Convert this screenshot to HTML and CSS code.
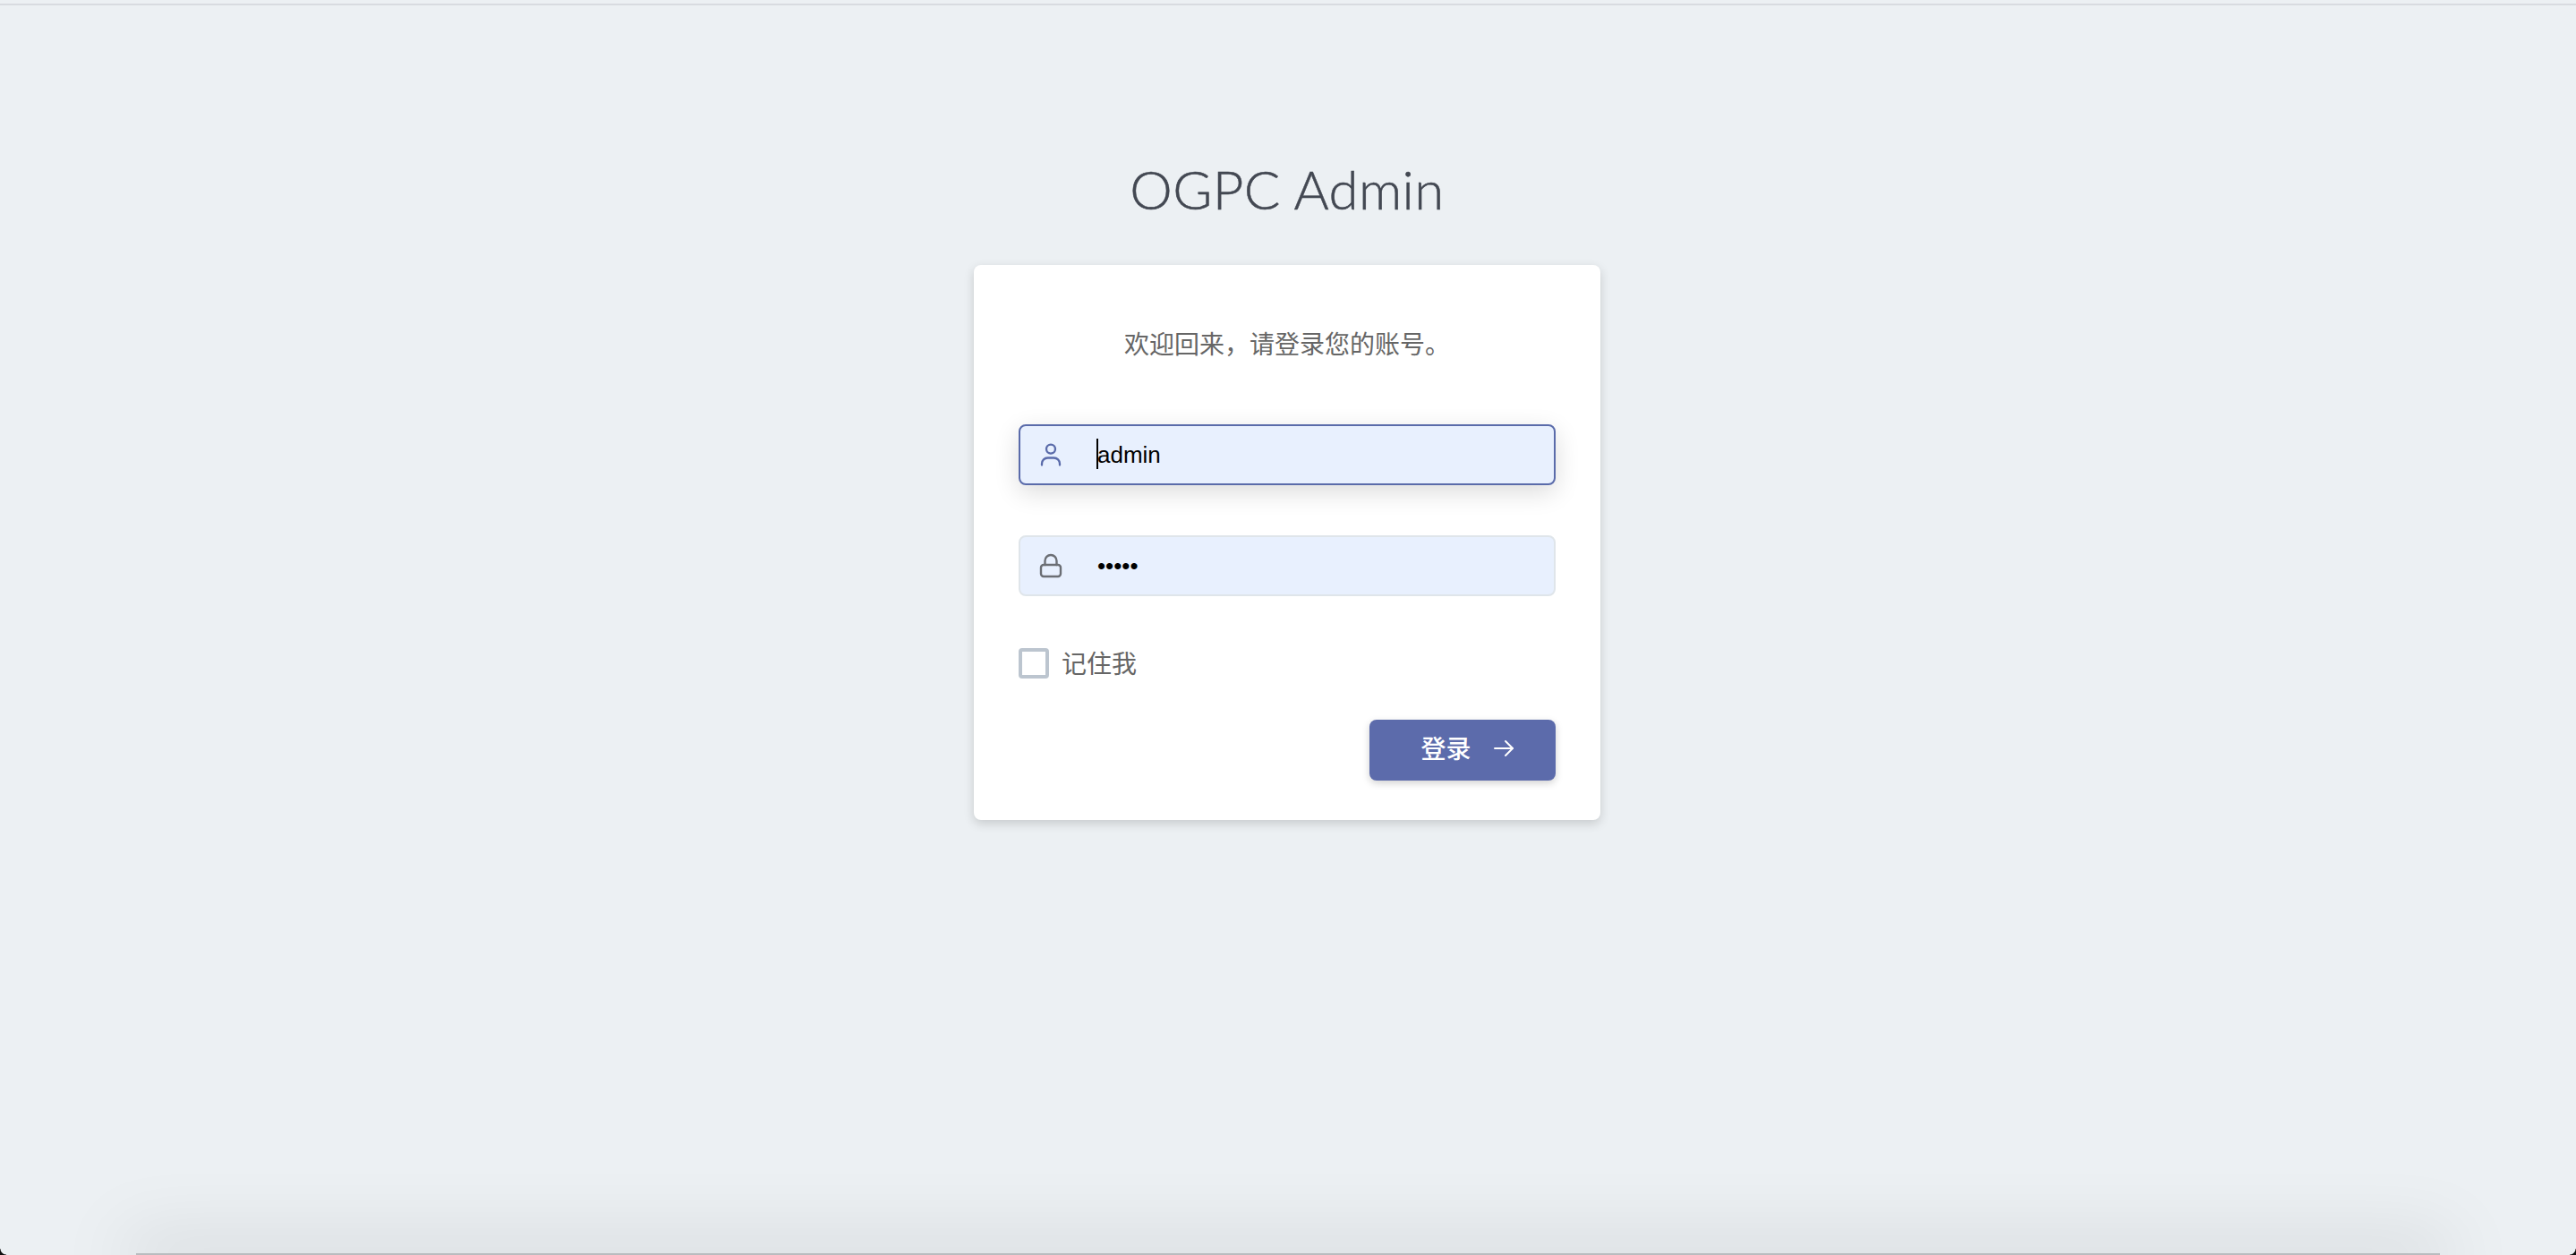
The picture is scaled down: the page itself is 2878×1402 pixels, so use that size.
FILE: index.html
```html
<!DOCTYPE html>
<html>
<head>
    <meta charset="utf-8">
    <meta name="viewport" content="width=device-width, initial-scale=1">
    <title>OGPC Admin</title>
    <link rel="stylesheet" href="styles.css">
</head>
<body>
    <div class="top-line"></div>

    <div class="login">
        <h1 class="brand">OGPC Admin</h1>

        <form class="card">
            <p class="welcome">欢迎回来，请登录您的账号。</p>

            <div class="field field-focus">
                <svg class="field-icon" width="28" height="28" viewBox="0 0 28 28" fill="none" stroke="currentColor" stroke-width="2.3" stroke-linecap="round" stroke-linejoin="round">
                    <circle cx="14" cy="7.6" r="5"/>
                    <path d="M4 25.5v-1.5a6.5 6.5 0 0 1 6.5-6.5h7a6.5 6.5 0 0 1 6.5 6.5v1.5"/>
                </svg>
                <span class="caret"></span>
                <input class="field-input" type="text" value="admin">
            </div>

            <div class="field">
                <svg class="field-icon" width="28" height="28" viewBox="0 0 28 28" fill="none" stroke="currentColor" stroke-width="2.4" stroke-linecap="round" stroke-linejoin="round">
                    <rect x="3" y="13" width="22" height="13" rx="3"/>
                    <path d="M7.5 13V8.5a6.5 6.5 0 0 1 13 0V13"/>
                </svg>
                <input class="field-input" type="password" value="admin">
            </div>

            <label class="remember">
                <span class="checkbox"></span>
                <span>记住我</span>
            </label>

            <div class="actions">
                <button class="submit" type="button">
                    <span class="submit-text">登录</span>
                    <svg width="24" height="24" viewBox="0 0 24 24" fill="none" stroke="currentColor" stroke-width="2" stroke-linecap="round" stroke-linejoin="round">
                        <path d="M2 12h20"/>
                        <path d="M14 4l8 8-8 8"/>
                    </svg>
                </button>
            </div>
        </form>
    </div>

    <div class="window-shadow"></div>
    <span class="corner corner-left"></span>
    <span class="corner corner-right"></span>
</body>
</html>
```

FILE: styles.css
```css
* {
    box-sizing: border-box;
}
html, body {
    height: 100%;
}
body {
    margin: 0;
    position: relative;
    overflow: hidden;
    background-color: #ecf0f3;
    font-family: "Noto Sans CJK SC", "Liberation Sans", sans-serif;
}
.top-line {
    height: 2px;
    margin-top: 4px;
    background-color: #d8dbe0;
}
.login {
    display: flex;
    flex-direction: column;
    align-items: center;
    padding-right: 2px;
}
.brand {
    margin: 165px 0 45px;
    font-family: "Lato", "Open Sans", sans-serif;
    font-size: 60px;
    font-weight: 300;
    line-height: 80px;
    letter-spacing: 0.4px;
    color: #434852;
    -webkit-text-stroke: 0.5px #434852;
}
.card {
    width: 700px;
    height: 620px;
    padding: 67px 50px 0;
    background-color: #fff;
    border-radius: 8px;
    box-shadow: 0 4px 12px rgba(0, 0, 0, 0.16);
}
.welcome {
    margin: 0 0 71px;
    font-size: 28px;
    line-height: 40px;
    text-align: center;
    color: #666;
}
.field {
    position: relative;
    display: flex;
    align-items: center;
    height: 68px;
    margin-bottom: 56px;
    padding-left: 20px;
    background-color: #e8f0fe;
    border: 2px solid #dfe5ea;
    border-radius: 8px;
    color: #6b6e74;
}
.field-focus {
    border-color: #5a6baa;
    color: #5a6baa;
    box-shadow: 0 8px 28px rgba(0, 0, 0, 0.14);
}
.field-icon {
    flex: none;
}
.field-input {
    flex: 1;
    min-width: 0;
    margin-left: 38px;
    padding: 0;
    border: none;
    outline: none;
    background: none;
    font-family: "Liberation Sans", Arial, sans-serif;
    font-size: 26px;
    color: #000;
}
.caret {
    position: absolute;
    left: 85px;
    top: 14px;
    width: 2px;
    height: 34px;
    background-color: #000;
}
.remember {
    display: flex;
    align-items: center;
    gap: 14px;
    margin-top: 58px;
    font-size: 28px;
    line-height: 34px;
    color: #666;
}
.remember span:last-child {
    margin-top: -3px;
}
.checkbox {
    width: 34px;
    height: 34px;
    background-color: #fff;
    border: 4px solid #bcc5cf;
    border-radius: 4px;
}
.actions {
    display: flex;
    justify-content: flex-end;
    margin-top: 46px;
}
.submit {
    display: flex;
    align-items: center;
    justify-content: center;
    gap: 24px;
    width: 208px;
    height: 68px;
    padding: 0 0 4px 11px;
    background-color: #5c6bab;
    border: none;
    border-radius: 8px;
    box-shadow: 0 3px 8px rgba(0, 0, 0, 0.18);
    font-family: inherit;
    font-size: 28px;
    font-weight: 500;
    color: #fff;
}
.submit-text {
    margin-top: -2px;
}
.window-shadow {
    position: absolute;
    left: 152px;
    right: 152px;
    bottom: 0;
    height: 2px;
    background-color: #b9bcbf;
    box-shadow: 0 0 80px 12px rgba(0, 0, 0, 0.17);
}
.corner {
    position: absolute;
    bottom: 0;
    width: 7px;
    height: 7px;
}
.corner-left {
    left: 0;
    background: radial-gradient(circle at top right, transparent 6px, #111 7px);
}
.corner-right {
    right: 0;
    background: radial-gradient(circle at top left, transparent 6px, #111 7px);
}
```
